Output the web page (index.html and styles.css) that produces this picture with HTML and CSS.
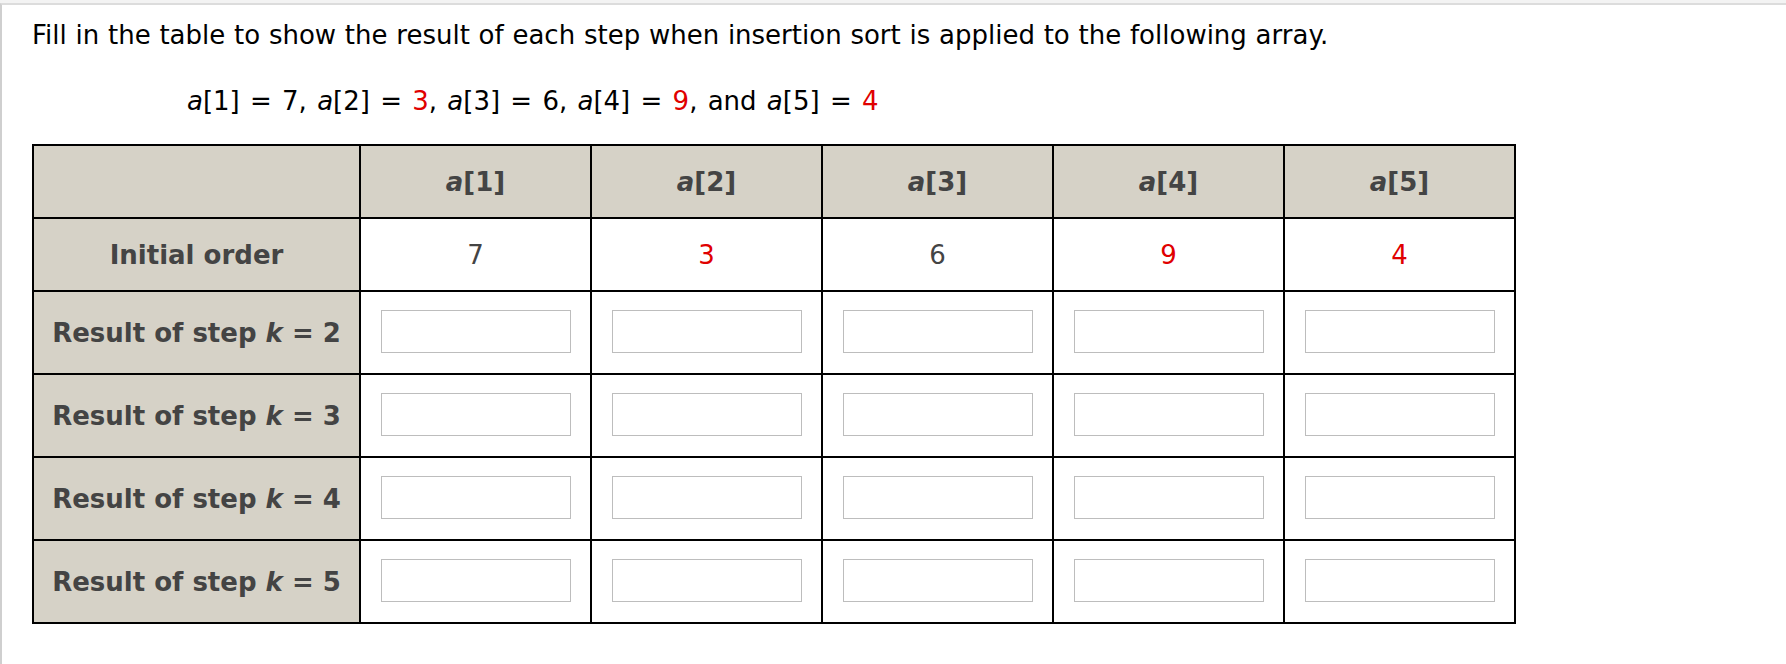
FILE: index.html
```html
<!DOCTYPE html>
<html>
<head>
<meta charset="utf-8">
<link rel="stylesheet" href="styles.css">
</head>
<body>
<div class="panel">
  <p class="prompt">Fill in the table to show the result of each step when insertion sort is applied to the following array.</p>
  <p class="array"><i>a</i>[1] = 7, <i>a</i>[2] = <span class="red">3</span>, <i>a</i>[3] = 6, <i>a</i>[4] = <span class="red">9</span>, and <i>a</i>[5] = <span class="red">4</span></p>
  <table class="grid">
    <colgroup>
      <col class="c-label">
      <col class="c-val"><col class="c-val"><col class="c-val"><col class="c-val"><col class="c-val">
    </colgroup>
    <tr class="r-head">
      <th class="shade"></th>
      <th class="shade"><i>a</i>[1]</th>
      <th class="shade"><i>a</i>[2]</th>
      <th class="shade"><i>a</i>[3]</th>
      <th class="shade"><i>a</i>[4]</th>
      <th class="shade"><i>a</i>[5]</th>
    </tr>
    <tr class="r-init">
      <th class="shade">Initial order</th>
      <td>7</td>
      <td class="red">3</td>
      <td>6</td>
      <td class="red">9</td>
      <td class="red">4</td>
    </tr>
    <tr class="r-step">
      <th class="shade">Result of step <i>k</i> = 2</th>
      <td><input type="text"></td><td><input type="text"></td><td><input type="text"></td><td><input type="text"></td><td><input type="text"></td>
    </tr>
    <tr class="r-step">
      <th class="shade">Result of step <i>k</i> = 3</th>
      <td><input type="text"></td><td><input type="text"></td><td><input type="text"></td><td><input type="text"></td><td><input type="text"></td>
    </tr>
    <tr class="r-step">
      <th class="shade">Result of step <i>k</i> = 4</th>
      <td><input type="text"></td><td><input type="text"></td><td><input type="text"></td><td><input type="text"></td><td><input type="text"></td>
    </tr>
    <tr class="r-step">
      <th class="shade">Result of step <i>k</i> = 5</th>
      <td><input type="text"></td><td><input type="text"></td><td><input type="text"></td><td><input type="text"></td><td><input type="text"></td>
    </tr>
  </table>
</div>
</body>
</html>
```
FILE: styles.css
```css
html, body {
  margin: 0;
  padding: 0;
}
body {
  background: #f3f3f3;
  padding-top: 3px;
  font-family: "DejaVu Sans", Verdana, sans-serif;
  font-size: 26px;
  color: #000;
  overflow: hidden;
}
.panel {
  background: #fff;
  border-top: 2px solid #dcdcdc;
  border-left: 2px solid #cfcfcf;
  box-sizing: border-box;
  min-height: calc(100vh - 3px);
  padding: 16px 30px 0 30px;
}
.prompt {
  margin: 0;
  line-height: 29px;
  word-spacing: 0.5px;
}
.array {
  margin: 37px 0 0 155px;
  line-height: 29px;
  word-spacing: 2px;
}
.red {
  color: #e00000;
}
.grid {
  margin-top: 28px;
  border-collapse: collapse;
  table-layout: fixed;
  width: 1483px;
  border: 2px solid #000;
}
.c-label { width: 327px; }
.c-val { width: 231px; }
.grid th, .grid td {
  border: 2px solid #000;
  padding: 0;
  text-align: center;
  vertical-align: middle;
}
.grid th {
  font-weight: bold;
  color: #444;
}
.grid td {
  color: #444;
  font-weight: normal;
}
.grid td.red {
  color: #e00000;
}
.shade {
  background: #d6d2c7;
}
.r-head, .r-init {
  height: 73px;
}
.r-step {
  height: 83px;
}
.grid input {
  display: block;
  margin: -2px auto 0 auto;
  width: 190px;
  height: 43px;
  box-sizing: border-box;
  border: 1px solid #bdbdbd;
  padding: 0 6px;
  font: inherit;
  background: #fff;
  outline: none;
}
```
